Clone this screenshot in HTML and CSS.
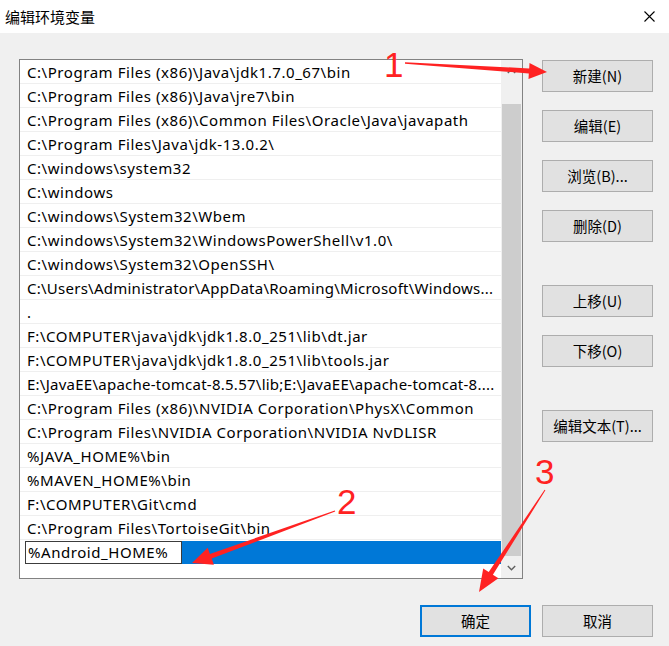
FILE: index.html
```html
<!DOCTYPE html>
<html lang="zh-CN">
<head>
<meta charset="utf-8">
<title>编辑环境变量</title>
<link rel="stylesheet" href="styles.css">
</head>
<body>
<div class="window">
  <div class="titlebar">
    <span class="title">编辑环境变量</span>
    <span class="close">
      <svg width="11" height="11" viewBox="0 0 11 11"><path d="M0.5 0.5 L10.5 10.5 M10.5 0.5 L0.5 10.5" stroke="#000" stroke-width="1.1" fill="none"/></svg>
    </span>
  </div>
  <div class="content">
    <div class="main">
      <div class="listbox">
        <div class="rows">
          <div class="row">C:\Program Files (x86)\Java\jdk1.7.0_67\bin</div>
          <div class="row">C:\Program Files (x86)\Java\jre7\bin</div>
          <div class="row">C:\Program Files (x86)\Common Files\Oracle\Java\javapath</div>
          <div class="row">C:\Program Files\Java\jdk-13.0.2\</div>
          <div class="row">C:\windows\system32</div>
          <div class="row">C:\windows</div>
          <div class="row">C:\windows\System32\Wbem</div>
          <div class="row">C:\windows\System32\WindowsPowerShell\v1.0\</div>
          <div class="row">C:\windows\System32\OpenSSH\</div>
          <div class="row fit">C:\Users\Administrator\AppData\Roaming\Microsoft\Windows...</div>
          <div class="row">.</div>
          <div class="row">F:\COMPUTER\java\jdk\jdk1.8.0_251\lib\dt.jar</div>
          <div class="row">F:\COMPUTER\java\jdk\jdk1.8.0_251\lib\tools.jar</div>
          <div class="row fit">E:\JavaEE\apache-tomcat-8.5.57\lib;E:\JavaEE\apache-tomcat-8....</div>
          <div class="row">C:\Program Files (x86)\NVIDIA Corporation\PhysX\Common</div>
          <div class="row">C:\Program Files\NVIDIA Corporation\NVIDIA NvDLISR</div>
          <div class="row">%JAVA_HOME%\bin</div>
          <div class="row">%MAVEN_HOME%\bin</div>
          <div class="row">F:\COMPUTER\Git\cmd</div>
          <div class="row">C:\Program Files\TortoiseGit\bin</div>
          <div class="row editing"><span class="editor">%Android_HOME%</span><span class="highlight"></span></div>
        </div>
        <div class="scrollbar">
          <div class="sb-arrow">
            <svg width="9" height="6" viewBox="0 0 9 6"><path d="M0.8 5 L4.5 1.2 L8.2 5" stroke="#606060" stroke-width="1.4" fill="none"/></svg>
          </div>
          <div class="sb-track"><div class="sb-thumb"></div></div>
          <div class="sb-arrow">
            <svg width="9" height="6" viewBox="0 0 9 6"><path d="M0.8 1 L4.5 4.8 L8.2 1" stroke="#606060" stroke-width="1.4" fill="none"/></svg>
          </div>
        </div>
      </div>
      <div class="side-buttons">
        <button class="btn">新建(N)</button>
        <button class="btn">编辑(E)</button>
        <button class="btn">浏览(B)...</button>
        <button class="btn">删除(D)</button>
        <button class="btn group-start">上移(U)</button>
        <button class="btn">下移(O)</button>
        <button class="btn group-start">编辑文本(T)...</button>
      </div>
    </div>
    <div class="footer">
      <button class="btn default">确定</button>
      <button class="btn">取消</button>
    </div>
  </div>
  <svg class="annotations" width="669" height="646" viewBox="0 0 669 646">
    <g fill="#ff2222">
      <polygon points="405,62.3 529.2,68.4 529.5,62.9 547,72 528.5,78.9 528.8,73.4 405,63.7"/>
      <polygon points="334.8,510.5 209.9,553.9 207.7,547.7 192,563 213.9,564.7 211.7,558.6 335.2,511.5"/>
      <polygon points="544.6,489.7 488.7,572.1 483.2,568.6 479,592 498.4,578.2 492.9,574.7 545.4,490.3"/>
      <text x="384" y="77" class="num">1</text>
      <text x="337" y="514" class="num">2</text>
      <text x="535" y="484" class="num">3</text>
    </g>
  </svg>
</div>
</body>
</html>
```

FILE: styles.css
```css
* { box-sizing: border-box; }

html, body {
  margin: 0;
  padding: 0;
  background: #f0f0f0;
}

body {
  font-family: "Noto Sans", "Noto Sans CJK SC", sans-serif;
  color: #000;
}

.window {
  position: relative;
  width: 669px;
  height: 646px;
  background: #f0f0f0;
  overflow: hidden;
}

.titlebar {
  height: 33px;
  background: #fff;
  display: flex;
  align-items: center;
  justify-content: space-between;
  padding: 0 14px 0 5px;
}

.title {
  font-family: "Noto Sans CJK SC", sans-serif;
  font-size: 15px;
  line-height: 1;
  margin-top: -1px;
}

.close {
  display: flex;
  width: 11px;
  height: 11px;
  margin-top: -1px;
}

.content {
  padding: 26px 16px 0 19px;
}

.main {
  display: flex;
  gap: 19px;
  align-items: flex-start;
}

.listbox {
  width: 504px;
  height: 520px;
  border: 1px solid #828282;
  background: #fff;
  display: flex;
}

.rows {
  width: 481px;
  display: flex;
  flex-direction: column;
}

.row {
  height: 24px;
  border-bottom: 1px solid #efefef;
  padding: 0 2px 0 7px;
  font-size: 15px;
  letter-spacing: 0.55px;
  line-height: 24px;
  white-space: nowrap;
  overflow: hidden;
  text-overflow: ellipsis;
}

.row.fit {
  letter-spacing: 0.25px;
}

.row.editing {
  display: flex;
  border-bottom: none;
  padding: 1px 0 0 5px;
}

.editor {
  display: block;
  flex: none;
  width: 157px;
  height: 23px;
  border: 1px solid #3c3c3c;
  background: #fff;
  padding-left: 2px;
  line-height: 21px;
}

.highlight {
  flex: 1;
  height: 23px;
  background: #0078d7;
}

.scrollbar {
  width: 21px;
  background: #f0f0f0;
  display: flex;
  flex-direction: column;
}

.sb-arrow {
  height: 21px;
  display: flex;
  align-items: center;
  justify-content: center;
}

.sb-track {
  flex: 1;
  padding: 23px 1px 1px 1px;
}

.sb-thumb {
  height: 452px;
  background: #cdcdcd;
}

.side-buttons {
  display: flex;
  flex-direction: column;
  gap: 18px;
  padding-top: 1px;
}

.btn {
  width: 111px;
  height: 32px;
  background: #e1e1e1;
  border: 1px solid #adadad;
  font-family: "Noto Sans CJK SC", sans-serif;
  font-size: 14.5px;
  color: #000;
  padding: 0;
  margin: 0;
  line-height: 1;
}

.btn.group-start {
  margin-top: 25px;
}

.btn.default {
  border: 2px solid #0078d7;
}

.footer {
  display: flex;
  justify-content: flex-end;
  gap: 11px;
  margin-top: 26px;
}

.annotations {
  position: absolute;
  left: 0;
  top: 0;
  pointer-events: none;
}

.num {
  font-family: "Liberation Sans", sans-serif;
  font-size: 35px;
}
```
